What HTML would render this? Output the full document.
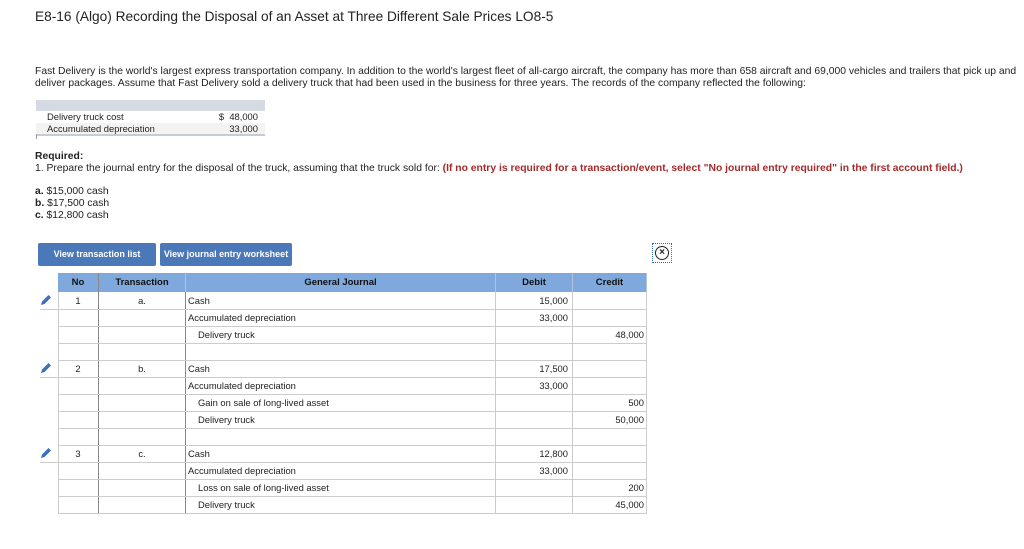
<!DOCTYPE html>
<html><head><meta charset="utf-8"><style>
body{margin:0;width:1024px;height:549px;background:#fff;font-family:"Liberation Sans",sans-serif;color:#222;position:relative;overflow:hidden}
.a{position:absolute;white-space:nowrap}
.p{font-size:10.35px;line-height:12px}
.btn{position:absolute;background:#4a78b8;color:#fff;font-weight:bold;font-size:9px;height:23px;line-height:23px;text-align:center;border-radius:2px}
.hd{position:absolute;top:273px;height:19px;background:#7fa8dc;font-weight:bold;font-size:9.5px;line-height:19px;text-align:center;color:#111;border-right:1px solid #b0c4dc}
.hl{position:absolute;height:1px;background:#ccc}
.vl{position:absolute;width:1px;background:#bbb}
.c{position:absolute;font-size:9.4px;line-height:18px;color:#222}
</style></head><body>
<div class="a" style="left:35px;top:9px;font-size:13.7px;color:#222">E8-16 (Algo) Recording the Disposal of an Asset at Three Different Sale Prices LO8-5</div>
<div class="a p" style="left:35px;top:66px">Fast Delivery is the world's largest express transportation company. In addition to the world's largest fleet of all-cargo aircraft, the company has more than 658 aircraft and 69,000 vehicles and trailers that pick up and</div>
<div class="a p" style="left:35px;top:78px">deliver packages. Assume that Fast Delivery sold a delivery truck that had been used in the business for three years. The records of the company reflected the following:</div>
<div class="a" style="left:36px;top:100px;width:229px;height:11px;background:#d6dbe3"></div>
<div class="a" style="left:36px;top:123px;width:229px;height:11px;background:#f3f3f3"></div>
<div class="a" style="left:36px;top:134px;width:229px;height:2px;background:#c5ccd6"></div>
<div class="a" style="left:36px;top:134px;width:1px;height:5px;background:#999"></div>
<div class="a" style="left:47px;top:111px;font-size:9.4px;line-height:12px">Delivery truck cost<br>Accumulated depreciation</div>
<div class="a" style="left:200px;top:111px;width:58px;text-align:right;font-size:9.4px;line-height:12px">$&nbsp;&nbsp;48,000<br>33,000</div>
<div class="a p" style="left:35px;top:151px;font-weight:bold">Required:</div>
<div class="a p" style="left:35px;top:163px">1. Prepare the journal entry for the disposal of the truck, assuming that the truck sold for: <b style="color:#a52a2a">(If no entry is required for a transaction/event, select "No journal entry required" in the first account field.)</b></div>
<div class="a p" style="left:35px;top:186px"><b>a.</b> $15,000 cash<br><b>b.</b> $17,500 cash<br><b>c.</b> $12,800 cash</div>
<div class="btn" style="left:38px;top:243px;width:118px">View transaction list</div>
<div class="btn" style="left:160px;top:243px;width:132px">View journal entry worksheet</div>
<div class="a" style="left:652px;top:243px;width:20px;height:20px;border:1px dotted #36c;box-sizing:border-box"></div>
<div class="a" style="left:655px;top:246px;width:14px;height:14px;border:1.5px solid #222;border-radius:50%;box-sizing:border-box;text-align:center;font-size:10px;line-height:11px;font-weight:bold">×</div>
<div class="hd" style="left:58px;width:40px">No</div>
<div class="hd" style="left:99px;width:86px">Transaction</div>
<div class="hd" style="left:186px;width:309px">General Journal</div>
<div class="hd" style="left:496px;width:76px">Debit</div>
<div class="hd" style="left:573px;width:73px">Credit</div>
<div class="vl" style="left:58px;top:292px;height:222px;background:#ccc"></div>
<div class="vl" style="left:98px;top:273px;height:241px;background:#888"></div>
<div class="vl" style="left:185px;top:292px;height:222px;background:#888"></div>
<div class="vl" style="left:495px;top:292px;height:222px;background:#ccc"></div>
<div class="vl" style="left:572px;top:292px;height:222px;background:#ccc"></div>
<div class="vl" style="left:646px;top:292px;height:222px;background:#ccc"></div>
<div id="rows"></div>
<script>
var R=[
[292,'1','a.','Cash',0,'15,000',''],[309,'','','Accumulated depreciation',0,'33,000',''],[326,'','','Delivery truck',1,'','48,000'],[343,'','','',0,'',''],
[360,'2','b.','Cash',0,'17,500',''],[377,'','','Accumulated depreciation',0,'33,000',''],[394,'','','Gain on sale of long-lived asset',1,'','500'],[411,'','','Delivery truck',1,'','50,000'],[428,'','','',0,'',''],
[445,'3','c.','Cash',0,'12,800',''],[462,'','','Accumulated depreciation',0,'33,000',''],[479,'','','Loss on sale of long-lived asset',1,'','200'],[496,'','','Delivery truck',1,'','45,000']];
var h='';
R.forEach(function(r){var y=r[0];
h+='<div class="hl" style="left:'+(r[1]?40:58)+'px;width:'+(r[1]?606:588)+'px;top:'+(y+17)+'px"></div>';
if(r[1]){h+='<svg class="a" style="left:40px;top:'+(y+2)+'px" width="12" height="12" viewBox="0 0 12 12"><path d="M1 11 L2 7.5 L8.5 1 L11 3.5 L4.5 10 Z" fill="#3b6fc0"/></svg>';
h+='<div class="c" style="left:58px;width:40px;text-align:center;top:'+y+'px">'+r[1]+'</div><div class="c" style="left:99px;width:86px;text-align:center;top:'+y+'px">'+r[2]+'</div>';}
h+='<div class="c" style="left:'+(r[4]?198:188)+'px;top:'+y+'px">'+r[3]+'</div>';
h+='<div class="c" style="left:496px;width:72px;text-align:right;top:'+y+'px">'+r[5]+'</div>';
h+='<div class="c" style="left:573px;width:71px;text-align:right;top:'+y+'px">'+r[6]+'</div>';});
document.getElementById('rows').innerHTML=h;
</script>
</body></html>
